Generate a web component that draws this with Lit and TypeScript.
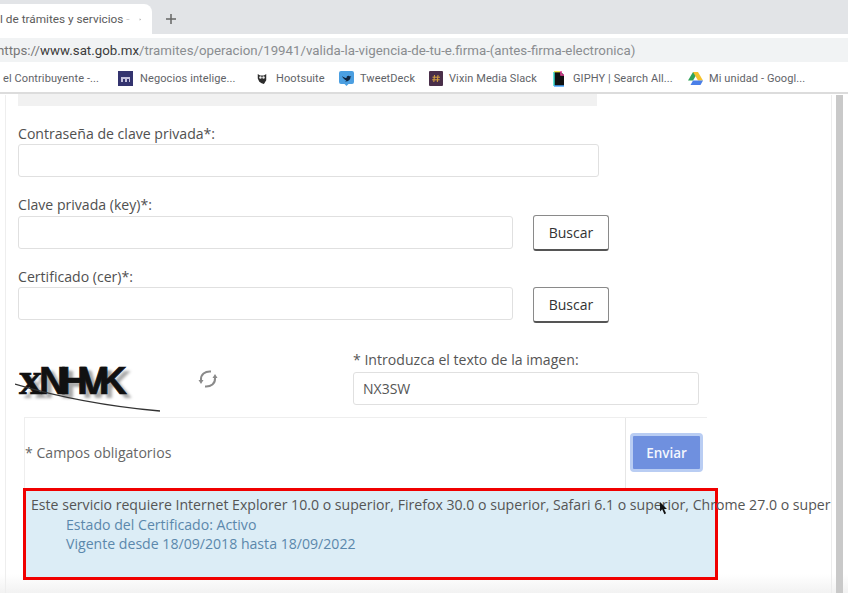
import { LitElement, html, css, svg } from "lit";
import { customElement } from "lit/decorators.js";

const marks = {
  negocios: svg`<svg width="15" height="15" viewBox="0 0 15 15"><rect width="15" height="15" fill="#34346f"/><path d="M3 6h9v5H3z" fill="#c4c1dc"/><path d="M5 8h2v3H5zM9 8h2v3H9z" fill="#34346f"/></svg>`,
  hootsuite: svg`<svg width="10" height="14" viewBox="0 0 13 15"><path d="M1 1 4 3h5l3-2v8l-3 5-3-1-3-2-2-4z" fill="#2c2c2c"/><circle cx="4.500" cy="5.500" r="1.600" fill="#eee"/><circle cx="8.500" cy="5.500" r="1.600" fill="#eee"/></svg>`,
  tweetdeck: svg`<svg width="15" height="15" viewBox="0 0 15 15"><path d="M2 0h11a2 2 0 0 1 2 2v9a2 2 0 0 1-2 2H9.500l-2 2-2-2H2a2 2 0 0 1-2-2V2a2 2 0 0 1 2-2z" fill="#4b9fe1"/><path d="M3 5c2 1.500 3 2 4.500 2 0-2 2-3 3.500-1.500l1.300-.5-.8 1.300C11.500 9 9 11 5 10.500c1 0 2-.5 2.500-1C6 9.300 4 7.500 3 5z" fill="#10253f"/></svg>`,
  slack: svg`<svg width="14" height="15" viewBox="0 0 14 15"><rect width="14" height="15" rx="1" fill="#4a2f4a"/><path d="M5.500 4 4.800 11M9 4l-.7 7M3.500 6.200h7.500M3.200 8.800h7.500" stroke="#d9a441" stroke-width="1"/></svg>`,
  giphy: svg`<svg width="12" height="16" viewBox="0 0 12 16"><path d="M1 1h7l3 3v11H1z" fill="#111"/><path d="M1 1v14" stroke="#33d9c8" stroke-width="1.500"/><path d="M1 15h10" stroke="#4aa8ff" stroke-width="1.500"/><path d="M8 0v4h3" stroke="#e8459a" stroke-width="1.500" fill="none"/><path d="M1 .700h6" stroke="#f3e24a" stroke-width="1.300"/></svg>`,
  drive: svg`<svg width="15" height="13" viewBox="0 0 15 13"><path d="M5 0h5L5 8.500H0z" fill="#2fa35a"/><path d="M5 0h5l5 8.500h-5z" fill="#f4c22e"/><path d="M2.500 13 5 8.500h10L12.500 13z" fill="#4a7fe8"/></svg>`,
};

@customElement("app-root")
export class AppRoot extends LitElement {
  static styles = css`
    :host {
      display: block;
      width: 848px;
      height: 593px;
      overflow: hidden;
      position: relative;
      background: #fff;
      font-family: "Open Sans", "Noto Sans", sans-serif;
      color: #555;
    }
    .tabstrip {
      height: 34px;
      background: #e2e4e7;
      display: flex;
      align-items: flex-end;
      font-family: Roboto, "Liberation Sans", sans-serif;
    }
    .tab {
      width: 152px;
      height: 30px;
      background: #fff;
      border-radius: 0 8px 0 0;
      display: flex;
      align-items: center;
      justify-content: flex-end;
      box-sizing: border-box;
      padding: 0 11px 0 0;
      font-size: 11.8px;
      color: #5b5b5b;
      white-space: nowrap;
      gap: 9px;
    }
    .tab span { flex: none; }
    .tab span u { text-decoration: none; color: #c9c9c9; }
    .plus { margin: 0 0 10px 14px; width: 10px; height: 10px; }
    .addr {
      height: 28px;
      background: #fff;
      box-sizing: border-box;
      padding: 4px 0;
    }
    .url {
      height: 24px;
      background: #f1f3f4;
      font-family: Roboto, "Liberation Sans", sans-serif;
      font-size: 13.3px;
      line-height: 25px;
      color: #8a8d90;
      white-space: nowrap;
      margin-left: -3px;
      overflow: hidden;
    }
    .url b { font-weight: 400; color: #3c3c3c; }
    .url i { font-style: normal; color: #777; }
    .bookmarks {
      height: 32px;
      box-sizing: border-box;
      background: #fff;
      border-bottom: 2px solid #dcdcdc;
      display: flex;
      align-items: center;
      font-family: Roboto, "Liberation Sans", sans-serif;
      font-size: 11px;
      letter-spacing: 0.1px;
      color: #5f6368;
      white-space: nowrap;
      padding: 3px 0 0 3px;
    }
    .bm { display: flex; align-items: center; gap: 7px; }
    .bm svg { display: block; flex: none; }
    .b1 { width: 115px; }
    .b2 { width: 139px; }
    .b3 { width: 82px; gap: 9px; }
    .b4 { width: 90px; gap: 6px; }
    .b5 { width: 124px; gap: 6px; }
    .b6 { width: 135px; gap: 8px; }
    .b7 { gap: 6px; }
    .page {
      height: 499px;
      position: relative;
      padding-left: 18px;
      box-sizing: border-box;
      background: linear-gradient(#fff 480px, #f2f2f2);
    }
    .well { width: 579px; height: 12px; background: #f1f1f1; }
    .label { font-size: 14.1px; line-height: 20px; color: #505050; }
    .field {
      display: block;
      box-sizing: border-box;
      height: 33px;
      background: #fff;
      border: 1px solid #e0e0e0;
      border-radius: 3px;
    }
    .f1 { margin-top: 18px; }
    .f1 .field { width: 581px; }
    .row { display: flex; align-items: flex-start; }
    .row .field { width: 495px; }
    .f2 { margin-top: 18px; }
    .f2 .row { margin-top: 1px; }
    .f3 { margin-top: 16px; }
    .btn {
      box-sizing: border-box;
      width: 76px;
      height: 36px;
      margin-left: 20px;
      border: 1px solid #8a8a8a;
      border-bottom: 2px solid #555;
      border-radius: 3px;
      background: #fff;
      font: 14px "Open Sans", sans-serif;
      color: #333;
      padding: 0;
    }
    .f2 .btn { margin-top: -1px; }
    .captcha-row { display: flex; margin-top: 36px; height: 68px; }
    .captcha { width: 335px; position: relative; }
    .cap-text {
      position: absolute;
      left: 1px;
      top: 0;
      font-family: "Liberation Sans", sans-serif;
      font-size: 39px;
      font-weight: 700;
      letter-spacing: -7.5px;
      line-height: 40px;
      color: #111;
      -webkit-text-stroke: 0.7px #111;
      text-shadow: 5px 4px 3px #a8a8a8;
      white-space: nowrap;
    }
    .cap-text em {
      font-family: "Liberation Serif", serif;
      font-size: 46px;
      font-style: normal;
      letter-spacing: -3px;
    }
    .strike { position: absolute; left: -3px; top: 23px; }
    .refresh { position: absolute; left: 179px; top: 9px; }
    .cap-input { width: 346px; margin-top: -9px; }
    .cap-input .label { color: #555; }
    .cap-input .val {
      box-sizing: border-box;
      height: 33px;
      border: 1px solid #e0e0e0;
      border-radius: 3px;
      font-size: 14px;
      line-height: 31px;
      padding-left: 9px;
      color: #555;
      margin-top: 2px;
    }
    .actions {
      margin: -10px 0 0 6px;
      width: 683px;
      height: 72px;
      box-sizing: border-box;
      border-top: 1px solid #eee;
      border-left: 1px solid #eee;
      display: flex;
    }
    .req {
      width: 601px;
      box-sizing: border-box;
      border-right: 1px solid #e6e6e6;
      font-size: 14.1px;
      color: #666;
      line-height: 20px;
      padding-top: 25px;
    }
    .send {
      box-sizing: border-box;
      width: 73px;
      height: 39px;
      margin: 15px 0 0 4px;
      background: #6f90df;
      border: 3px solid #b9cdf3;
      border-radius: 4px;
      color: #f3f6fd;
      font: 600 13.500px "Open Sans", sans-serif;
      padding: 0;
    }
    .alert {
      position: absolute;
      left: 23px;
      top: 394px;
      width: 695px;
      height: 92px;
      box-sizing: border-box;
      background: #dcedf6;
      border: 3px solid #f00000;
      padding: 4px 0 0 5px;
      font-size: 14.120px;
      line-height: 19px;
      color: #4f5b66;
      white-space: nowrap;
    }
    .alert .note { color: #555; line-height: 20px; }
    .alert .cert { color: #5b88ac; padding-left: 35px; line-height: 19px; }
    .scroll { position: absolute; top: 1px; bottom: 0; left: 836px; width: 7px; background: #c9c9c9; }
    .scroll-edge { position: absolute; top: 1px; bottom: 0; left: 831px; width: 1px; background: #ececec; }
    .left-edge { position: absolute; top: 1px; bottom: 0; left: 5px; width: 1px; background: #eeeeee; }
    .cursor { position: absolute; left: 659px; top: 408px; }
  `;

  render() {
    return html`
      <div class="tabstrip">
        <div class="tab">
          <span>l de trámites y servicios <u>-</u></span>
          <svg width="9" height="9" viewBox="0 0 9 9"><path d="M1 1l7 7M8 1 1 8" stroke="#666" stroke-width="1.300"/></svg>
        </div>
        <svg class="plus" viewBox="0 0 10 10"><path d="M5 0v10M0 5h10" stroke="#666" stroke-width="1.500"/></svg>
      </div>
      <div class="addr">
        <div class="url"><i>https://</i><b>www.sat.gob.mx</b>/tramites/operacion/19941/valida-la-vigencia-de-tu-e.firma-(antes-firma-electronica)</div>
      </div>
      <div class="bookmarks">
        <div class="bm b1">el Contribuyente -...</div>
        <div class="bm b2">${marks.negocios}<span>Negocios intelige...</span></div>
        <div class="bm b3">${marks.hootsuite}<span>Hootsuite</span></div>
        <div class="bm b4">${marks.tweetdeck}<span>TweetDeck</span></div>
        <div class="bm b5">${marks.slack}<span>Vixin Media Slack</span></div>
        <div class="bm b6">${marks.giphy}<span>GIPHY | Search All...</span></div>
        <div class="bm b7">${marks.drive}<span>Mi unidad - Googl...</span></div>
      </div>
      <div class="page">
        <div class="well"></div>
        <div class="f1">
          <div class="label">Contraseña de clave privada*:</div>
          <div class="field"></div>
        </div>
        <div class="f2">
          <div class="label">Clave privada (key)*:</div>
          <div class="row"><div class="field"></div><button class="btn">Buscar</button></div>
        </div>
        <div class="f3">
          <div class="label">Certificado (cer)*:</div>
          <div class="row"><div class="field"></div><button class="btn">Buscar</button></div>
        </div>
        <div class="captcha-row">
          <div class="captcha">
            <div class="cap-text"><em>x</em>NHVK</div>
            <svg class="strike" width="146" height="36" viewBox="0 0 146 36"><path d="M0 2C40 14 90 24 145 29" stroke="#333" stroke-width="1.300" fill="none"/></svg>
            <svg class="refresh" width="22" height="22" viewBox="0 0 22 22" fill="none" stroke="#8a8a8a" stroke-width="2"><path d="M4 12C3.500 6.500 8 3 14 3.500"/><path d="M18 10C18.500 15.500 14 19 8 18.500"/><path d="M1.500 12h5L4 16z" fill="#8a8a8a" stroke="none"/><path d="M15.500 10h5L18 6z" fill="#8a8a8a" stroke="none"/></svg>
          </div>
          <div class="cap-input">
            <div class="label">* Introduzca el texto de la imagen:</div>
            <div class="val">NX3SW</div>
          </div>
        </div>
        <div class="actions">
          <div class="req">* Campos obligatorios</div>
          <button class="send">Enviar</button>
        </div>
        <div class="alert">
          <div class="note">Este servicio requiere Internet Explorer 10.0 o superior, Firefox 30.0 o superior, Safari 6.1 o superior, Chrome 27.0 o super</div>
          <div class="cert">Estado del Certificado: Activo</div>
          <div class="cert">Vigente desde 18/09/2018 hasta 18/09/2022</div>
        </div>
        <div class="left-edge"></div>
        <div class="scroll-edge"></div>
        <div class="scroll"></div>
        <svg class="cursor" width="9" height="13" viewBox="0 0 10 15"><path d="M1 0v11l2.500-2.500L6 14l2-1-2.500-5H9z" fill="#111"/></svg>
      </div>
    `;
  }
}
